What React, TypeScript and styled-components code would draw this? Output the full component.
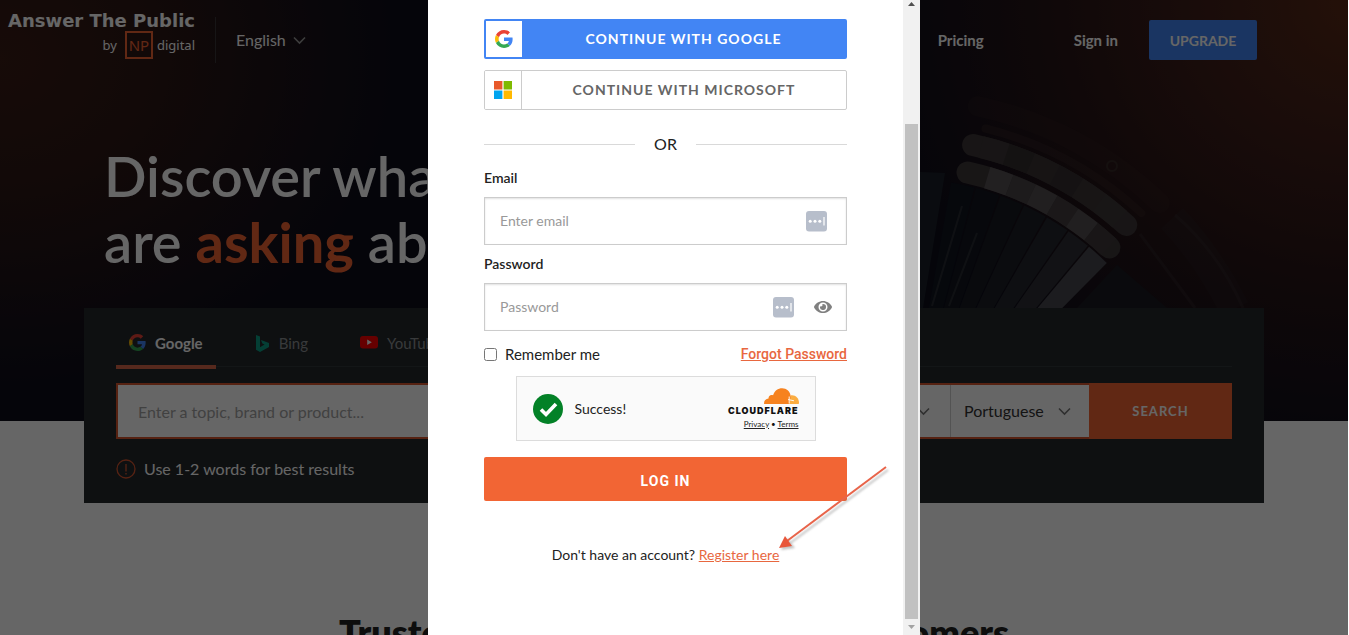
import React from "react";
import styled, { createGlobalStyle } from "styled-components";

const sans = `Lato, "Open Sans", sans-serif`;
const orange = "#f26534";

const GlobalStyle = createGlobalStyle`
  *, *::before, *::after { box-sizing: border-box; }
  html, body, #root { height: 100%; }
  body { margin: 0; overflow: hidden; background: #fff; font-family: ${sans}; color: #222; }
  button, input, select { font-family: inherit; margin: 0; }
  h1, h2, p { margin: 0; }
`;

const Page = styled.div`
  height: 100vh;
  overflow: hidden;
  position: relative;
  border-right: 1px solid #fff;
`;

/* ---------- landing page behind the dialog ---------- */

const Hero = styled.section`
  position: relative;
  height: 421px;
  background:
    radial-gradient(ellipse 500px 460px at 101% 0%, #5c2a16 0%, #42201a 30%, rgba(46, 23, 22, 0.8) 62%, rgba(13, 13, 27, 0) 100%),
    radial-gradient(ellipse 400px 330px at 0% 14%, #3a1c14 0%, rgba(52, 26, 20, 0.8) 40%, rgba(13, 13, 27, 0) 100%),
    #0d0d1b;
`;

const FanArt = styled.svg`
  position: absolute;
  right: 0;
  top: 0;
`;

const Header = styled.header`
  position: relative;
  display: flex;
  align-items: center;
  justify-content: space-between;
  height: 80px;
  padding: 0 91px 0 9px;
`;

const HeaderSide = styled.div`
  display: flex;
  align-items: center;
`;

const Brand = styled.a`
  display: flex;
  flex-direction: column;
  align-items: flex-end;
  width: 186px;
  height: 58px;
  color: #fff;
  text-decoration: none;
  white-space: nowrap;
`;

const BrandName = styled.span`
  font: 700 18px/20px "DejaVu Sans", sans-serif;
`;

const BrandBy = styled.span`
  display: flex;
  align-items: center;
  gap: 4px;
  font: 400 13px/26px "Noto Sans", sans-serif;
`;

const BrandBox = styled.span`
  display: grid;
  place-items: center;
  width: 28px;
  height: 28px;
  margin-left: 4px;
  border: 2px solid ${orange};
  color: ${orange};
  font: 400 15px/24px "Noto Sans", sans-serif;
`;

const Divider = styled.span`
  width: 1px;
  height: 46px;
  margin: 0 20px;
  background: #3b3638;
`;

const SelectWrap = styled.label<{ $width: number; $color: string; $chevron: string }>`
  position: relative;
  display: flex;
  align-items: center;
  flex: none;
  width: ${(p) => p.$width}px;
  color: ${(p) => p.$color};

  select {
    width: 100%;
    padding: 0;
    border: 0;
    appearance: none;
    background: transparent;
    color: inherit;
    font-size: 16px;
    line-height: 20px;
  }
  svg {
    position: absolute;
    right: 0;
    color: ${(p) => p.$chevron};
    pointer-events: none;
  }
`;

const NavLink = styled.a`
  margin-right: 90px;
  color: #fff;
  font-weight: 700;
  font-size: 15px;
  line-height: 20px;
  text-decoration: none;

  & + & { margin-right: 31px; }
`;

const UpgradeButton = styled.button`
  width: 108px;
  height: 40px;
  border: 0;
  border-radius: 2px;
  background: #4285f4;
  color: #fff;
  font-weight: 700;
  font-size: 14px;
`;

const Headline = styled.h1`
  position: relative;
  width: 1140px;
  max-width: 100%;
  margin: 63px auto 0;
  color: #fff;
  font-weight: 600;
  font-size: 56px;
  line-height: 66px;
  white-space: nowrap;

  em { color: ${orange}; font-style: normal; font-weight: 700; }
`;

const SearchCard = styled.section`
  position: relative;
  width: calc(100% - 168px);
  max-width: 1180px;
  height: 195px;
  margin: -113px auto 0;
  padding: 22px 32px 0;
  background: #24292c;
`;

const Tabs = styled.div`
  display: flex;
  gap: 26px;
  height: 37px;
  border-bottom: 1px solid #30383b;
`;

const Tab = styled.button<{ $active?: boolean }>`
  display: flex;
  align-items: center;
  gap: 9px;
  height: 39px;
  padding: 0 13px 10px;
  border: 0;
  border-bottom: 4px solid ${(p) => (p.$active ? "#d8664a" : "transparent")};
  background: transparent;
  color: ${(p) => (p.$active ? "#fff" : "#8d9194")};
  font-weight: ${(p) => (p.$active ? 700 : 400)};
  font-size: 15px;
  line-height: 20px;
`;

const SearchBar = styled.form`
  display: flex;
  height: 56px;
  margin-top: 16px;
  border: 2px solid #d8562f;
  background: #fff;
`;

const TopicInput = styled.input`
  flex: 1;
  min-width: 0;
  padding: 0 20px;
  border: 0;
  background: transparent;
  font-size: 16px;
  &::placeholder { color: #a3a3a3; opacity: 1; }
`;

const SearchOption = styled.div`
  display: flex;
  align-items: center;
  padding: 0 20px 0 13px;
  border-left: 1px solid #d0d0d0;
`;

const SearchButton = styled.button`
  width: 143px;
  margin: -2px;
  border: 0;
  background: ${orange};
  color: #fff;
  font-weight: 700;
  font-size: 13px;
  letter-spacing: 1px;
`;

const Hint = styled.p`
  display: flex;
  align-items: center;
  gap: 8px;
  margin-top: 20px;
  color: #fff;
  font-size: 16px;
  line-height: 20px;
`;

const Trusted = styled.h2`
  margin-top: 107px;
  color: #222;
  font-weight: 800;
  font-size: 36px;
  line-height: 44px;
  text-align: center;
  white-space: nowrap;
`;

/* ---------- dialog ---------- */

const Overlay = styled.div`
  position: absolute;
  inset: 0;
  display: flex;
  justify-content: center;
  background: rgba(0, 0, 0, 0.6);
`;

const Dialog = styled.div`
  display: flex;
  width: 492px;
  max-width: 100%;
  background: #fff;
`;

const DialogBody = styled.form`
  display: flex;
  flex-direction: column;
  flex: 1;
  min-width: 0;
  padding: 19px 56px 0;
`;

const ScrollTrack = styled.div`
  display: flex;
  flex-direction: column;
  align-items: center;
  justify-content: space-between;
  width: 17px;
  padding: 2px 0 6px;
  background: #f1f1f1;
`;

const ScrollThumb = styled.div`
  flex: 1;
  width: 13px;
  margin: 118px 0 6px;
  background: #c1c1c1;
`;

const ProviderButton = styled.button<{ $primary?: boolean }>`
  display: flex;
  align-items: stretch;
  height: 40px;
  margin-bottom: 11px;
  padding: 0;
  overflow: hidden;
  border: ${(p) => (p.$primary ? "2px solid #4285f4" : "1px solid #ccc")};
  border-radius: 2px;
  background: ${(p) => (p.$primary ? "#4285f4" : "#fff")};
  color: ${(p) => (p.$primary ? "#fff" : "#666")};
  font-weight: 700;
  font-size: 14px;
  letter-spacing: 1px;
`;

const ProviderIcon = styled.span<{ $ruled?: boolean }>`
  display: grid;
  place-items: center;
  width: ${(p) => (p.$ruled ? 37 : 36)}px;
  background: #fff;
  border-right: ${(p) => (p.$ruled ? "1px solid #ccc" : "0")};
`;

const ProviderLabel = styled.span`
  flex: 1;
  align-self: center;
  padding-bottom: 2px;
`;

const OrRow = styled.div`
  display: flex;
  align-items: center;
  gap: 19px;
  margin: 11px 0 12px;
  font-size: 16px;
  line-height: 24px;

  &::before, &::after { content: ""; flex: 1; height: 1px; background: #d9d9d9; }
`;

const FieldLabel = styled.label`
  font-weight: 600;
  font-size: 14px;
  line-height: 20px;
`;

const Field = styled.div`
  display: flex;
  align-items: center;
  gap: 20px;
  height: 48px;
  margin: 9px 0;
  padding: 0 14px 0 15px;
  border: 1px solid #ccc;
  box-shadow: inset 0 1px 2px rgba(0, 0, 0, 0.12);

  input {
    flex: 1;
    min-width: 0;
    padding: 0;
    border: 0;
    background: transparent;
    font-size: 14px;
    line-height: 20px;
  }
  input::placeholder { color: #999; opacity: 1; }
  svg { flex: none; }
`;

const EmailField = styled(Field)`
  padding-right: 19px;
`;

const RevealButton = styled.button`
  display: flex;
  padding: 0;
  border: 0;
  background: transparent;
`;

const Options = styled.div`
  display: flex;
  align-items: center;
  justify-content: space-between;
  margin-top: 4px;
  font-size: 15px;
  line-height: 20px;
`;

const Remember = styled.label`
  display: flex;
  align-items: center;
  gap: 8px;
  input { width: 13px; height: 13px; }
`;

const ForgotLink = styled.a`
  color: #e8673f;
  font: 500 14px/20px Roboto, sans-serif;
`;

const Captcha = styled.div`
  display: flex;
  align-items: center;
  align-self: center;
  width: 300px;
  height: 65px;
  margin-top: 12px;
  padding: 0 16px;
  border: 1px solid #dcdcdc;
  background: #fafafa;
  font-size: 14px;
`;

const CaptchaStatus = styled.span`
  flex: 1;
  margin-left: 12px;
`;

const CaptchaBrand = styled.div`
  display: flex;
  flex-direction: column;
  align-items: flex-end;
  color: #111;
`;

const CloudflareName = styled.strong`
  margin-top: 1px;
  font: 900 9px/10px Inter, "DejaVu Sans", sans-serif;
  letter-spacing: 1px;
`;

const CaptchaLinks = styled.span`
  margin-top: 2px;
  font-size: 8px;
  line-height: 12px;
  a { color: #222; }
`;

const LoginButton = styled.button`
  height: 44px;
  margin-top: 16px;
  padding: 4px 0 0;
  border: 0;
  border-radius: 2px;
  background: ${orange};
  color: #fff;
  font: 700 14px/20px Roboto, sans-serif;
  letter-spacing: 1px;
`;

const Register = styled.p`
  position: relative;
  margin-top: 44px;
  font-size: 14px;
  line-height: 20px;
  text-align: center;
  a { color: #e8673f; }
`;

const Arrow = styled.svg`
  position: absolute;
  right: -48px;
  top: -83px;
  pointer-events: none;
`;

const ArrowShadow = styled.g`
  filter: blur(1px);
  opacity: 0.35;
`;

/* ---------- drawings ---------- */

const GoogleMark = ({ size = 18 }: { size?: number }) => (
  <svg width={size} height={size} viewBox="0 0 48 48" aria-hidden="true">
    <path fill="#EA4335" d="M24 9.5c3.54 0 6.71 1.22 9.21 3.6l6.85-6.85C35.9 2.38 30.47 0 24 0 14.62 0 6.51 5.38 2.56 13.22l7.98 6.19C12.43 13.72 17.74 9.5 24 9.5z" />
    <path fill="#4285F4" d="M46.98 24.55c0-1.57-.15-3.09-.38-4.55H24v9.02h12.94c-.58 2.96-2.26 5.48-4.78 7.18l7.73 6c4.51-4.18 7.09-10.36 7.09-17.65z" />
    <path fill="#FBBC05" d="M10.53 28.59c-.48-1.45-.76-2.99-.76-4.59s.27-3.14.76-4.59l-7.98-6.19C.92 16.46 0 20.12 0 24c0 3.88.92 7.54 2.56 10.78l7.97-6.19z" />
    <path fill="#34A853" d="M24 48c6.48 0 11.93-2.13 15.89-5.81l-7.73-6c-2.15 1.45-4.92 2.3-8.16 2.3-6.26 0-11.57-4.22-13.47-9.91l-7.98 6.19C6.51 42.62 14.62 48 24 48z" />
  </svg>
);

const MicrosoftMark = () => (
  <svg width="18" height="18" viewBox="0 0 18 18" aria-hidden="true">
    <path fill="#e8592b" d="M0 0h8.4v8.4H0z" />
    <path fill="#7fba00" d="M9.6 0H18v8.4H9.6z" />
    <path fill="#00a4ef" d="M0 9.6h8.4V18H0z" />
    <path fill="#ffb900" d="M9.6 9.6H18V18H9.6z" />
  </svg>
);

const BingMark = () => (
  <svg width="15" height="18" viewBox="0 0 15 18" aria-hidden="true">
    <path fill="#0c9f86" d="M1 1l4 1.4v10.9l4.6-2.8-2.2-1L6 6l8 2.9v4.2L5 18l-4-2.3z" />
  </svg>
);

const YoutubeMark = () => (
  <svg width="18" height="13" viewBox="0 0 18 13" aria-hidden="true">
    <rect width="18" height="12.6" rx="3" fill="#f00" />
    <path fill="#fff" d="M7.2 3.6l4.6 2.7-4.6 2.7z" />
  </svg>
);

const Chevron = () => (
  <svg width="13" height="9" viewBox="0 0 13 9" aria-hidden="true">
    <path d="M1 1.5l5.5 5.5L12 1.5" fill="none" stroke="currentColor" strokeWidth="1.6" />
  </svg>
);

const ManagerIcon = () => (
  <svg width="21" height="21" viewBox="0 0 21 21" aria-hidden="true">
    <rect width="21" height="20.5" rx="3" fill="#b7becb" />
    <circle cx="4.2" cy="10.2" r="1.5" fill="#fff" />
    <circle cx="9" cy="10.2" r="1.5" fill="#fff" />
    <circle cx="13.8" cy="10.2" r="1.5" fill="#fff" />
    <path d="M18 6v8.5" stroke="#fff" strokeWidth="1.2" />
  </svg>
);

const EyeIcon = () => (
  <svg width="18" height="16" viewBox="0 0 576 512" aria-hidden="true">
    <path fill="#808080" d="M572.52 241.4C518.29 135.59 410.93 64 288 64S57.68 135.64 3.48 241.41a32.35 32.35 0 0 0 0 29.19C57.71 376.41 165.07 448 288 448s230.32-71.64 284.52-177.41a32.35 32.35 0 0 0 0-29.19zM288 400a144 144 0 1 1 144-144 143.93 143.93 0 0 1-144 144zm0-240a95.31 95.31 0 0 0-25.31 3.79 47.85 47.85 0 0 1-66.9 66.9A95.78 95.78 0 1 0 288 160z" />
  </svg>
);

const WarningIcon = () => (
  <svg width="20" height="20" viewBox="0 0 20 20" fill="none" stroke="#d8562f" aria-hidden="true">
    <circle cx="10" cy="10" r="9" strokeWidth="1.3" />
    <path d="M10 5v7.5M10 14v1.5" strokeWidth="1.3" />
  </svg>
);

const CheckIcon = () => (
  <svg width="30" height="30" viewBox="0 0 30 30" aria-hidden="true">
    <circle cx="15" cy="15" r="15" fill="#038127" />
    <path d="M8 15.5l5 5L23 10" fill="none" stroke="#fff" strokeWidth="3.6" />
  </svg>
);

const CloudIcon = () => (
  <svg width="35" height="17" viewBox="0 0 35 17" aria-hidden="true">
    <path fill="#fbad41" d="M27 7.2c4.600-.5 8 2.800 8 7.800 0 .7-.2 1-.7 1H22z" />
    <path fill="#f6821f" d="M.1 16C-.3 12.800 1.600 10.500 4.500 10.400c0-2.700 2.200-4.200 4.600-3.100C10.400 2.900 14 .3 18.200.3c4.300 0 7.700 2.900 8.300 7 .3 1.800.1 3.400-.6 5.400L24.800 16z" />
    <path d="M24 11.500l6 1.300M25.200 8.500v7" stroke="#fff" strokeWidth=".9" />
  </svg>
);

/* The fan is a set of rings and spokes that share one hub. */
const HUB = { x: 900, y: 472 };
const at = (r: number, deg: number) => {
  const a = (deg * Math.PI) / 180;
  return `${(HUB.x + r * Math.sin(a)).toFixed(1)} ${(HUB.y - r * Math.cos(a)).toFixed(1)}`;
};
const arc = (r: number, from: number, to: number) => `M${at(r, from)}A${r} ${r} 0 0 1 ${at(r, to)}`;
const wedge = (r: number, from: number, to: number) =>
  `M${at(120, from)}L${at(r, from)}A${r} ${r} 0 0 1 ${at(r, to)}L${at(120, to)}z`;

const innerTones = ["#565154", "#494447", "#544e50", "#443e40", "#544e50", "#3f393a"];
const outerTones = ["#3c3637", "#332d2e", "#3a3334", "#352f30", "#3c3536", "#3e3738"];
const spokes = ["#0f1420", "#12161f", "#171a22", "#1d1f27", "#24262e", "#2d2f36", "#46474e"];

const Fan = () => (
  <FanArt width="428" height="421" viewBox="920 0 428 421" aria-hidden="true">
    <path d="M920 172l25 1-22 135h-3z" fill="#1a2029" />
    {spokes.map((tone, i) => (
      <path key={i} d={wedge(294, 10 + i * 5, 14.7 + i * 5)} fill={tone} />
    ))}
    <path d="M962 206l-30 100M977 233l-28 73" stroke="#2c3036" strokeWidth="2" opacity=".8" />
    <path d={arc(307, 12.7, 43)} stroke="#3c3739" strokeWidth="22" strokeLinecap="round" fill="none" />
    {innerTones.map((tone, i) => (
      <path key={i} d={arc(307, 16.5 + i * 4.4, 20.9 + i * 4.4)} stroke={tone} strokeWidth="22" fill="none" />
    ))}
    <path d={arc(335, 12.6, 42.5)} stroke={outerTones[0]} strokeWidth="22" strokeLinecap="round" fill="none" />
    {outerTones.map((tone, i) => (
      <path key={i} d={arc(335, 14 + i * 4.5, 18.5 + i * 4.5)} stroke={tone} strokeWidth="22" fill="none" />
    ))}
    <path d={arc(354, 14, 43)} stroke="#3a2829" strokeWidth="8" strokeLinecap="round" fill="none" opacity=".4" />
    <path d={arc(374, 12, 44)} stroke="#3b282a" strokeWidth="20" strokeLinecap="round" fill="none" opacity=".2" />
    <circle cx="1112" cy="166" r="5" fill="none" stroke="#3a302c" strokeWidth="2" opacity=".7" />
    <path d={arc(372, 47, 64)} stroke="#2b2328" strokeWidth="30" fill="none" opacity=".3" />
    <path d="M1140 234l55 74M1175 215q44 38 68 93" stroke="#3a3134" strokeWidth="3" fill="none" opacity=".35" />
    <path d="M1117 265l50 43h-90z" fill="#1b1a21" />
  </FanArt>
);

export default function App() {
  return (
    <Page>
      <GlobalStyle />
      <Hero>
        <Fan />
        <Header>
          <HeaderSide>
            <Brand href="#">
              <BrandName>Answer The Public</BrandName>
              <BrandBy>
                by <BrandBox>NP</BrandBox> digital
              </BrandBy>
            </Brand>
            <Divider />
            <SelectWrap $width={70} $color="#fff" $chevron="#999">
              <select aria-label="Site language">
                <option>English</option>
              </select>
              <Chevron />
            </SelectWrap>
          </HeaderSide>
          <HeaderSide>
            <NavLink href="#">Pricing</NavLink>
            <NavLink href="#">Sign in</NavLink>
            <UpgradeButton type="button">UPGRADE</UpgradeButton>
          </HeaderSide>
        </Header>
        <Headline>
          Discover what people
          <br />
          are <em>asking</em> about...
        </Headline>
      </Hero>

      <SearchCard>
        <Tabs>
          <Tab type="button" $active>
            <GoogleMark size={17} /> Google
          </Tab>
          <Tab type="button">
            <BingMark /> Bing
          </Tab>
          <Tab type="button">
            <YoutubeMark /> YouTube
          </Tab>
        </Tabs>
        <SearchBar>
          <TopicInput aria-label="Topic" placeholder="Enter a topic, brand or product..." />
          <SearchOption>
            <SelectWrap $width={107} $color="#333" $chevron="#777">
              <select aria-label="Region">
                <option>Brazil</option>
              </select>
              <Chevron />
            </SelectWrap>
          </SearchOption>
          <SearchOption>
            <SelectWrap $width={107} $color="#333" $chevron="#777">
              <select aria-label="Search language">
                <option>Portuguese</option>
              </select>
              <Chevron />
            </SelectWrap>
          </SearchOption>
          <SearchButton type="button">SEARCH</SearchButton>
        </SearchBar>
        <Hint>
          <WarningIcon /> Use 1-2 words for best results
        </Hint>
      </SearchCard>
      <Trusted>Trusted by thousands of happy customers</Trusted>

      <Overlay>
        <Dialog role="dialog" aria-label="Log in">
          <DialogBody>
            <ProviderButton type="button" $primary>
              <ProviderIcon>
                <GoogleMark />
              </ProviderIcon>
              <ProviderLabel>CONTINUE WITH GOOGLE</ProviderLabel>
            </ProviderButton>
            <ProviderButton type="button">
              <ProviderIcon $ruled>
                <MicrosoftMark />
              </ProviderIcon>
              <ProviderLabel>CONTINUE WITH MICROSOFT</ProviderLabel>
            </ProviderButton>
            <OrRow>OR</OrRow>
            <FieldLabel htmlFor="email">Email</FieldLabel>
            <EmailField>
              <input id="email" type="email" placeholder="Enter email" />
              <ManagerIcon />
            </EmailField>
            <FieldLabel htmlFor="password">Password</FieldLabel>
            <Field>
              <input id="password" type="password" placeholder="Password" />
              <ManagerIcon />
              <RevealButton type="button" aria-label="Show password">
                <EyeIcon />
              </RevealButton>
            </Field>
            <Options>
              <Remember>
                <input type="checkbox" /> Remember me
              </Remember>
              <ForgotLink href="#">Forgot Password</ForgotLink>
            </Options>
            <Captcha>
              <CheckIcon />
              <CaptchaStatus>Success!</CaptchaStatus>
              <CaptchaBrand>
                <CloudIcon />
                <CloudflareName>CLOUDFLARE</CloudflareName>
                <CaptchaLinks>
                  <a href="#">Privacy</a> • <a href="#">Terms</a>
                </CaptchaLinks>
              </CaptchaBrand>
            </Captcha>
            <LoginButton type="button">LOG IN</LoginButton>
            <Register>
              Don't have an account? <a href="#">Register here</a>
              <Arrow width="120" height="92" viewBox="0 0 120 92" aria-hidden="true">
                <ArrowShadow>
                  <path d="M113 8L14 82" stroke="#555" strokeWidth="2" />
                  <path d="M6 88l6-12 8 10z" fill="#555" />
                </ArrowShadow>
                <path d="M111 5L12 79" stroke="#e8644a" strokeWidth="2" />
                <path d="M4 86l6-12 7 10z" fill="#e8563a" />
              </Arrow>
            </Register>
          </DialogBody>
          <ScrollTrack>
            <svg width="7" height="4" viewBox="0 0 7 4" aria-hidden="true">
              <path d="M0 4l3.500-4L7 4z" fill="#505050" />
            </svg>
            <ScrollThumb />
            <svg width="7" height="4" viewBox="0 0 7 4" aria-hidden="true">
              <path d="M0 0l3.500 4L7 0z" fill="#a3a3a3" />
            </svg>
          </ScrollTrack>
        </Dialog>
      </Overlay>
    </Page>
  );
}
